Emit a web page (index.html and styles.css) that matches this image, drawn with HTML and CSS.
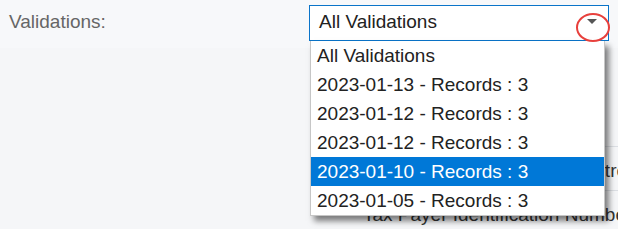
FILE: index.html
```html
<!DOCTYPE html>
<html>
<head>
<meta charset="utf-8">
<link rel="stylesheet" href="styles.css">
</head>
<body>
<div class="page">
  <div class="form-row">
    <label class="label">Validations:</label>
    <div class="select-wrap">
      <div class="select"><span class="select-value">All Validations</span><span class="caret"></span></div>
      <ul class="options">
        <li>All Validations</li>
        <li>2023-01-13 - Records : 3</li>
        <li>2023-01-12 - Records : 3</li>
        <li>2023-01-12 - Records : 3</li>
        <li class="selected">2023-01-10 - Records : 3</li>
        <li>2023-01-05 - Records : 3</li>
      </ul>
      <span class="callout"></span>
    </div>
  </div>
  <div class="content">
    <div class="spacer"></div>
    <div class="row"><span class="cell-b">Centre</span></div>
    <div class="row"><span class="cell-c">Tax Payer Identification Number</span></div>
  </div>
</div>
</body>
</html>
```
FILE: styles.css
```css
html, body {
  margin: 0;
  padding: 0;
}
body {
  background: #f5f6f8;
  font-family: "Liberation Sans", Arial, sans-serif;
  overflow: hidden;
}
.form-row {
  display: flex;
  align-items: flex-start;
  height: 48px;
  box-sizing: border-box;
  padding: 5px 0 0 9px;
  background: #f7f8fa;
}
.label {
  width: 300px;
  font-size: 19px;
  line-height: 34px;
  color: #666;
}
.select-wrap {
  position: relative;
  width: 300px;
}
.select {
  height: 36px;
  box-sizing: border-box;
  border: 1px solid #0a74c9;
  background: #fff;
  display: flex;
  align-items: center;
  justify-content: space-between;
  padding: 0 11px 3px 9px;
  font-size: 19px;
  color: #222;
}
.caret {
  width: 0;
  height: 0;
  border-left: 5px solid transparent;
  border-right: 5px solid transparent;
  border-top: 5px solid #555;
}
.options {
  position: absolute;
  top: 36px;
  left: 1px;
  width: 295px;
  box-sizing: border-box;
  margin: 0;
  padding: 0;
  list-style: none;
  background: #fff;
  border: 1px solid #c6c6c6;
  border-top: none;
  box-shadow: 4px 5px 6px rgba(0, 0, 0, 0.5);
  z-index: 2;
}
.options li {
  height: 29px;
  line-height: 29px;
  padding-left: 6px;
  font-size: 19px;
  color: #222;
  white-space: nowrap;
}
.options li.selected {
  background: #0078d7;
  color: #fff;
}
.callout {
  position: absolute;
  left: 267px;
  top: 8px;
  width: 34px;
  height: 29px;
  box-sizing: border-box;
  border: 2px solid #e8403c;
  border-radius: 50%;
  z-index: 3;
}
.content {
  margin-left: 320px;
}
.spacer {
  height: 98px;
}
.row {
  height: 44px;
  box-sizing: border-box;
  border-top: 1px solid #dcdfe4;
  padding-top: 13px;
  line-height: 22px;
  font-size: 19px;
  color: #333;
  white-space: nowrap;
}
.cell-b {
  margin-left: 250px;
}
.cell-c {
  margin-left: 43px;
}
```
